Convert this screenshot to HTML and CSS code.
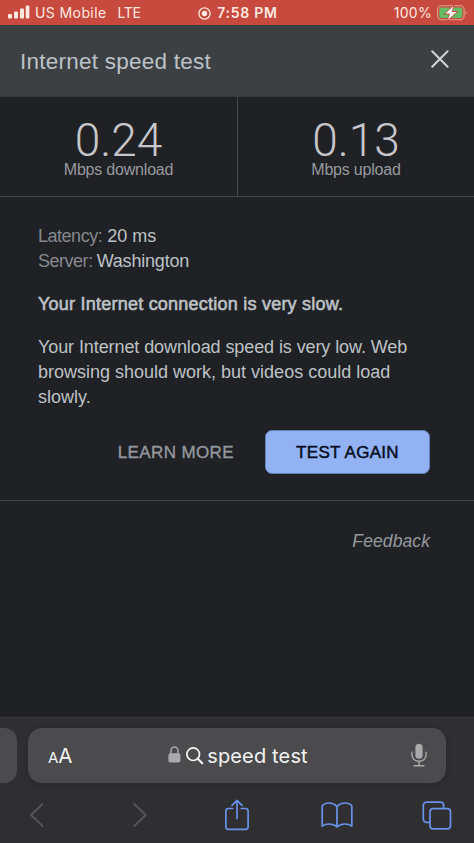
FILE: index.html
```html
<!DOCTYPE html>
<html lang="en">
<head>
<meta charset="utf-8">
<title>Internet speed test</title>
<link rel="stylesheet" href="styles.css">
</head>
<body>
<div class="status">
  <div class="carrier">
    <svg width="22" height="14" viewBox="0 0 22 14" fill="currentColor"><rect x="0" y="9" width="4" height="4.5" rx="1"/><rect x="6" y="6.5" width="4" height="7" rx="1"/><rect x="12" y="3.5" width="4" height="10" rx="1"/><rect x="17.7" y="0.5" width="3.7" height="13" rx="1"/></svg>
    <span class="name">US Mobile</span><span class="lte">LTE</span>
  </div>
  <div class="clock">
    <svg width="13" height="13" viewBox="0 0 13 13"><circle cx="6.5" cy="6.5" r="5.6" fill="none" stroke="currentColor" stroke-width="1.3"/><circle cx="6.5" cy="6.5" r="2.7" fill="currentColor"/></svg>
    <span class="time">7:58 PM</span>
  </div>
  <div class="power">
    <span class="pct">100%</span>
    <svg width="31" height="16" viewBox="0 0 31 16"><rect x="0.6" y="0.8" width="26.5" height="14" rx="4" fill="none" stroke="#e0a18c" stroke-width="1.1"/><rect x="2.3" y="2.5" width="23.1" height="10.6" rx="2.5" fill="#62bd64"/><path d="M28.6 5.5q2 2.3 0 4.6z" fill="#e0a18c"/><path d="M16.5 1 L8.3 8.6 H13.1 L11 14.8 L19.5 6.9 H14.6 Z" fill="#fff" stroke="#c8493e" stroke-width="1.6" paint-order="stroke"/></svg>
  </div>
</div>
<header class="title-bar">
  <h1>Internet speed test</h1>
  <svg class="close" width="18" height="18" viewBox="0 0 18 18" fill="none" stroke="#d0d3d6" stroke-width="2" stroke-linecap="round"><path d="M1.2 1.2 16.6 16.8M16.6 1.2 1.2 16.8"/></svg>
</header>
<section class="speeds">
  <div class="speed"><div class="value">0.24</div><div class="unit">Mbps download</div></div>
  <div class="speed"><div class="value">0.13</div><div class="unit">Mbps upload</div></div>
</section>
<main class="details">
  <div class="line"><span class="label">Latency:</span> <span>20 ms</span></div>
  <div class="line"><span class="label server">Server:</span> <span class="city">Washington</span></div>
  <p class="verdict">Your Internet connection is very slow.</p>
  <p class="advice"><span class="lead">Your Internet download speed is very low. Web</span><br><span>browsing should work, but videos could load</span><br>slowly.</p>
  <div class="actions"><a class="learn">LEARN MORE</a><button class="again" type="button">TEST AGAIN</button></div>
</main>
<footer class="feedback"><span>Feedback</span></footer>
<nav class="browser">
  <div class="tabs">
    <div class="prev"></div>
    <div class="address">
      <div class="reader"><span class="small-a">A</span><span class="big-a">A</span></div>
      <div class="query">
        <svg class="lock" width="13" height="17" viewBox="0 0 13 17"><path d="M3 8V4.7a3.5 3.7 0 0 1 7 0V8" fill="none" stroke="#aaaaad" stroke-width="1.5"/><rect x=".4" y="7.2" width="12" height="9.4" rx="1.8" fill="#aaaaad"/></svg>
        <svg class="lens" width="18" height="18" viewBox="0 0 18 18" fill="none" stroke="#f4f4f4" stroke-linecap="round"><circle cx="7.2" cy="7.2" r="6.3" stroke-width="1.7"/><path d="M11.8 11.8 16.2 16.2" stroke-width="2.2"/></svg>
        <span>speed test</span>
      </div>
      <svg class="mic" width="16" height="24" viewBox="0 0 16 24" fill="none" stroke="#a9a9ab" stroke-width="1.4" stroke-linecap="round"><rect x="4.4" y=".8" width="7.2" height="15" rx="3.6" fill="#a9a9ab" stroke="none"/><path d="M.9 9.3v2.2c0 4 3 6.8 7.1 6.8s7.1-2.8 7.1-6.8V9.3M8 18.3v4.4M3 22.8h10"/></svg>
    </div>
  </div>
  <div class="tools">
    <svg width="14" height="24" viewBox="0 0 14 24" fill="none" stroke="#55555a" stroke-width="1.8" stroke-linecap="round" stroke-linejoin="round"><path d="M12.6 1 1 12 12.6 23"/></svg>
    <svg class="forward" width="14" height="24" viewBox="0 0 14 24" fill="none" stroke="#55555a" stroke-width="1.8" stroke-linecap="round" stroke-linejoin="round"><path d="M1.2 1 12.8 12 1.2 23"/></svg>
    <svg width="26" height="32" viewBox="0 0 26 32" fill="none" stroke="#6891e8" stroke-width="1.7" stroke-linecap="round" stroke-linejoin="round"><path d="M8.7 9.5H4.5a2.6 2.6 0 0 0-2.6 2.6v15.600a2.600 2.600 0 0 0 2.600 2.600h17a2.600 2.600 0 0 0 2.600-2.600V12.100a2.600 2.600 0 0 0-2.600-2.600h-4.200M13 19.500V1.500M8 6.300 13 1.300 18 6.300"/></svg>
    <svg width="32" height="27" viewBox="0 0 32 27" fill="none" stroke="#6891e8" stroke-width="1.7" stroke-linejoin="round"><path d="M16 4.500C13.600 2 10.800 1 8.200 1S2.600 2 1.200 3.700V24.200C3 22.800 5.400 22 8.200 22S13.800 22.800 16 24.800C18.200 22.800 21 22 23.800 22S29 22.800 30.800 24.200V3.700C29.400 2 26.400 1 23.800 1S18.400 2 16 4.500ZM16 4.500V24.800"/></svg>
    <svg width="30" height="29" viewBox="0 0 30 29" fill="none" stroke="#6891e8" stroke-width="1.7"><rect x="8" y="7.700" width="20.500" height="20.200" rx="3.200"/><path d="M8 21.300H4.500a3.200 3.200 0 0 1-3.200-3.200V4.300A3.200 3.200 0 0 1 4.500 1.100H18.400a3.200 3.200 0 0 1 3.200 3.200V7.700"/></svg>
  </div>
</nav>
</body>
</html>
```

FILE: styles.css
```css
* { box-sizing: border-box; }
body { margin: 0; height: 843px; display: flex; flex-direction: column; background: #202124; color: #bdc1c6; font-family: "Liberation Sans", sans-serif; overflow: hidden; }
svg { display: block; flex: none; }
span { white-space: nowrap; }
h1, p { margin: 0; font-weight: 400; }
.status { height: 25px; flex: none; background: #c8493e; color: #ffe9e0; display: grid; grid-template-columns: 1fr auto 1fr; align-items: center; padding: 1px 6px 0 8px; font: 14px/24px Inter, sans-serif; }
.carrier, .clock, .power { display: flex; align-items: center; }
.carrier svg { margin-top: -2px; }
.name { margin-left: 5px; letter-spacing: .4px; }
.lte { margin-left: 11px; letter-spacing: -.3px; }
.time { font-weight: 600; margin-left: 6px; letter-spacing: .75px; }
.power { justify-content: flex-end; gap: 5px; }
.pct { letter-spacing: .3px; }
.title-bar { height: 72px; flex: none; background: #3c4043; border-bottom: 1px solid #37383b; padding: 2px 25px 0 20px; display: flex; align-items: center; justify-content: space-between; }
h1 { font-size: 22.5px; letter-spacing: .25px; line-height: 28px; }
.close { margin-top: -5px; }
.speeds { height: 100px; flex: none; display: grid; grid-template-columns: 1fr 1fr; border-bottom: 1px solid #46474a; }
.speed { display: flex; flex-direction: column; align-items: center; padding-top: 23px; }
.speed + .speed { border-left: 1px solid #46474a; }
.value { font: 300 46px/40px Roboto, sans-serif; color: #c6c6ca; }
.unit { font-size: 16px; line-height: 18px; margin-top: 1px; letter-spacing: -.2px; color: #96999e; }
.details { height: 304px; flex: none; border-bottom: 1px solid #414245; padding: 27px 44px 0 38px; font-size: 18px; line-height: 25px; }
.label { color: #85888d; letter-spacing: -.48px; }
.server { margin-right: -1px; }
.city { letter-spacing: -.2px; }
.verdict { -webkit-text-stroke: .6px; letter-spacing: .23px; margin-top: 18px; }
.advice { margin-top: 18px; }
.lead { letter-spacing: -.09px; }
.actions { display: flex; align-items: center; justify-content: flex-end; margin-top: 20px; gap: 31px; font-size: 17px; }
.learn { color: #96999e; -webkit-text-stroke: .35px; letter-spacing: .38px; }
.again { width: 165px; height: 44px; border: 1px solid #6583bb; border-radius: 7px; background: #92b2f4; color: #090f22; font: 17px "Liberation Sans", sans-serif; letter-spacing: .3px; -webkit-text-stroke: .5px; padding: 2px 0 0; }
.feedback { flex: 1; padding: 30px 44px 0; text-align: right; font-style: italic; font-size: 17.5px; line-height: 20px; letter-spacing: .1px; color: #96999e; }
.browser { height: 126px; flex: none; background: linear-gradient(#303033, #2f2f32); border-top: 1px solid #39393d; padding-top: 10px; }
.tabs { display: flex; gap: 11px; }
.prev { width: 17px; height: 55px; border-radius: 0 13px 13px 0; background: #4b4b4e; }
.address { width: 418px; height: 55px; border-radius: 14px; background: #4b4b4e; box-shadow: 0 1px 6px #27272a; color: #f4f4f4; font: 20px/24px Inter, sans-serif; display: grid; grid-template-columns: 1fr auto 1fr; align-items: center; padding: 1px 19px 0; }
.reader { display: flex; align-items: baseline; padding: 2px 0 0 1px; }
.small-a { font-size: 15px; }
.big-a { font-size: 20.5px; }
.query { display: flex; align-items: center; letter-spacing: .15px; padding-left: 2px; }
.lock { margin-top: -3px; }
.lens { margin: -1px 3px 0 5px; }
.mic { justify-self: end; margin-top: -2px; }
.tools { display: grid; grid-template-columns: repeat(5, 100px); place-items: center; height: 64px; margin-left: -13px; }
.forward { margin-left: 5px; }
```
